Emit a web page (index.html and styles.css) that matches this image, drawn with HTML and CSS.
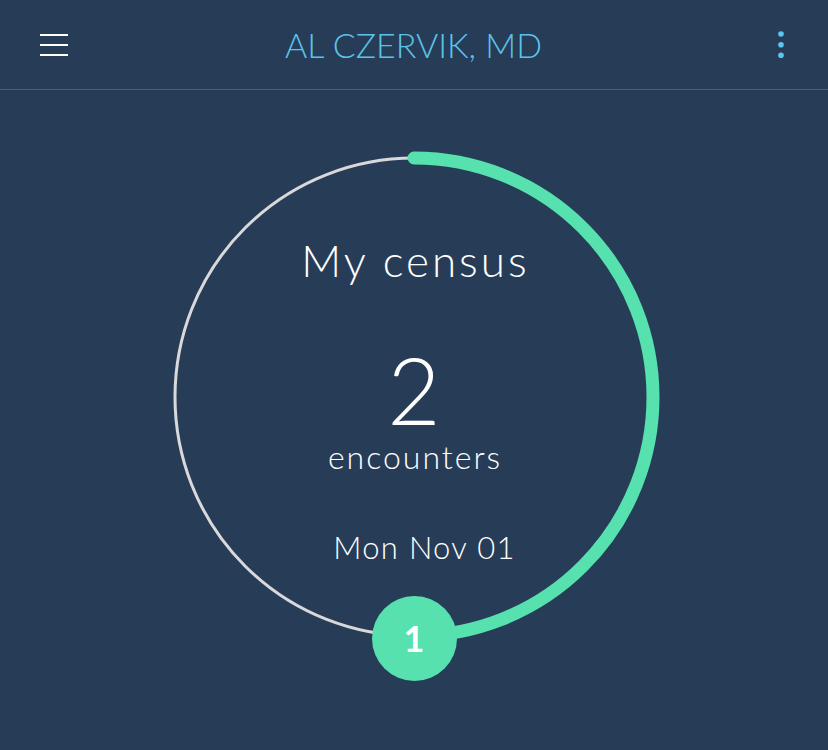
FILE: index.html
```html
<!DOCTYPE html>
<html lang="en">
<head>
<meta charset="utf-8">
<title>My census</title>
<link rel="stylesheet" href="styles.css">
</head>
<body>
<header class="topbar">
  <button class="icon-btn menu-btn" aria-label="Menu">
    <svg width="28" height="22" viewBox="0 0 28 22"><rect x="0" y="0" width="28" height="2" fill="#fff"/><rect x="0" y="10" width="28" height="2" fill="#fff"/><rect x="0" y="20" width="28" height="2" fill="#fff"/></svg>
  </button>
  <h1 class="title">AL CZERVIK, MD</h1>
  <button class="icon-btn more-btn" aria-label="More">
    <svg width="6" height="28" viewBox="0 0 6 28"><circle cx="3" cy="3" r="2.8" fill="#5bc6ef"/><circle cx="3" cy="13.7" r="2.8" fill="#5bc6ef"/><circle cx="3" cy="24.3" r="2.8" fill="#5bc6ef"/></svg>
  </button>
</header>
<main class="content">
  <section class="census">
    <svg class="ring" viewBox="0 0 492 492" width="492" height="492">
      <circle cx="246" cy="246" r="239" fill="none" stroke="#d9d9dc" stroke-width="3"/>
      <path d="M246 7 A239 239 0 0 1 246 485" fill="none" stroke="#56e1ae" stroke-width="13" stroke-linecap="round"/>
    </svg>
    <div class="census-text">
      <div class="census-label">My census</div>
      <div class="census-count">2</div>
      <div class="census-unit">encounters</div>
      <div class="census-date">Mon Nov 01</div>
    </div>
    <div class="badge">1</div>
  </section>
</main>
</body>
</html>
```
FILE: styles.css
```css
* { box-sizing: border-box; }
html, body {
  margin: 0;
  padding: 0;
  background: #273d57;
  height: 100%;
}
body {
  font-family: "Lato", "Open Sans", sans-serif;
  color: #ffffff;
}
.topbar {
  height: 90px;
  border-bottom: 1px solid #4a5f78;
  display: grid;
  grid-template-columns: 1fr auto 1fr;
  align-items: center;
  padding: 0 44px 0 40px;
}
.icon-btn {
  background: none;
  border: 0;
  padding: 0;
  display: flex;
  align-items: center;
}
.menu-btn { justify-self: start; }
.more-btn { justify-self: end; }
.title {
  margin: 0;
  font-weight: 300;
  font-size: 34px;
  line-height: 89px;
  color: #5bc3ea;
  letter-spacing: 0;
  position: relative;
  left: 1.5px;
}
.content {
  display: flex;
  justify-content: center;
  padding-top: 61px;
}
.census {
  position: relative;
  width: 492px;
  height: 492px;
}
.ring {
  position: absolute;
  left: 0;
  top: 0;
}
.census-text {
  position: relative;
  display: flex;
  flex-direction: column;
  align-items: center;
  padding-top: 84px;
  font-weight: 300;
}
.census-label {
  font-size: 44px;
  line-height: 50px;
  letter-spacing: 3px;
  padding-left: 3px;
}
.census-count {
  font-size: 92px;
  line-height: 92px;
  margin-top: 59px;
}
.census-unit {
  font-size: 32px;
  line-height: 36px;
  margin-top: 3px;
  letter-spacing: 2px;
  padding-left: 2px;
}
.census-date {
  font-size: 31px;
  line-height: 36px;
  margin-top: 54px;
  letter-spacing: 1.3px;
  padding-left: 21px;
}
.badge {
  position: absolute;
  left: 203.5px;
  top: 444.5px;
  width: 85px;
  height: 85px;
  border-radius: 50%;
  background: #56e1ae;
  color: #fff;
  font-weight: 700;
  font-size: 36px;
  display: flex;
  align-items: center;
  justify-content: center;
}
```
